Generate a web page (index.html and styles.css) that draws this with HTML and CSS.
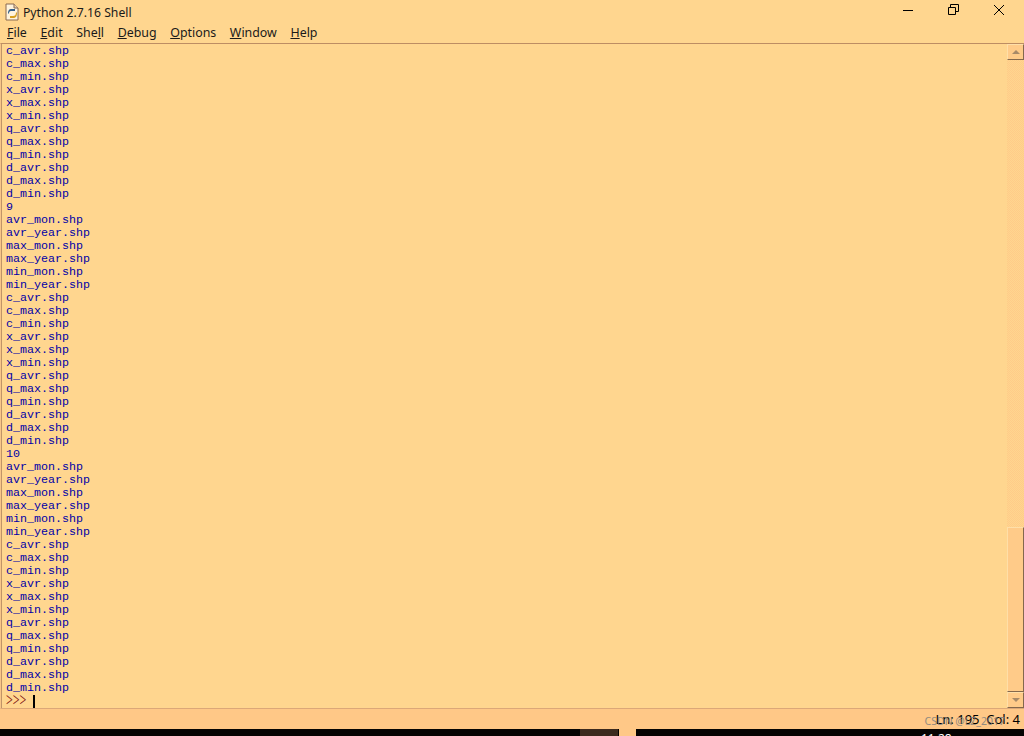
FILE: index.html
```html
<!DOCTYPE html>
<html lang="en">
<head>
<meta charset="utf-8">
<title>Python 2.7.16 Shell</title>
<link rel="stylesheet" href="styles.css">
</head>
<body>
<div class="window">
  <header class="titlebar">
    <svg class="app-icon" width="18" height="18" viewBox="0 0 18 18">
      <path d="M3 1h8l4 4v12H3z" fill="#fff3dc" stroke="#8a6a50"/>
      <path d="M11 1v4h4" fill="#e8d0b0" stroke="#8a6a50"/>
      <path d="M6 11c0-3 1-3 3-3h3V6H8C6 6 5 8 5 10z" fill="#34608c"/>
      <path d="M13 9c0 3-1 4-3 4H7v2h3c3 0 4-2 4-5z" fill="#d8a020"/>
    </svg>
    <span class="title">Python 2.7.16 Shell</span>
    <div class="controls">
      <svg width="12" height="12" viewBox="0 0 12 12"><path d="M0 6.500h10" stroke="#000" fill="none"/></svg>
      <svg width="12" height="12" viewBox="0 0 12 12"><path d="M.5 3.500h7v7h-7zM2.500 3.500v-3h8v7h-3" stroke="#000" fill="none"/></svg>
      <svg width="12" height="12" viewBox="0 0 12 12"><path d="M1 1l10 10M11 1L1 11" stroke="#000" fill="none"/></svg>
    </div>
  </header>
  <nav class="menubar">
    <span><u>F</u>ile</span>
    <span><u>E</u>dit</span>
    <span>She<u>l</u>l</span>
    <span><u>D</u>ebug</span>
    <span><u>O</u>ptions</span>
    <span><u>W</u>indow</span>
    <span><u>H</u>elp</span>
  </nav>
  <main class="editor">
    <pre class="output">c_avr.shp
c_max.shp
c_min.shp
x_avr.shp
x_max.shp
x_min.shp
q_avr.shp
q_max.shp
q_min.shp
d_avr.shp
d_max.shp
d_min.shp
9
avr_mon.shp
avr_year.shp
max_mon.shp
max_year.shp
min_mon.shp
min_year.shp
c_avr.shp
c_max.shp
c_min.shp
x_avr.shp
x_max.shp
x_min.shp
q_avr.shp
q_max.shp
q_min.shp
d_avr.shp
d_max.shp
d_min.shp
10
avr_mon.shp
avr_year.shp
max_mon.shp
max_year.shp
min_mon.shp
min_year.shp
c_avr.shp
c_max.shp
c_min.shp
x_avr.shp
x_max.shp
x_min.shp
q_avr.shp
q_max.shp
q_min.shp
d_avr.shp
d_max.shp
d_min.shp
<span class="prompt">&gt;&gt;&gt;</span><span class="caret"></span></pre>
    <aside class="scrollbar">
      <div class="arrow"><span class="tri-up"></span></div>
      <div class="track"></div>
      <div class="thumb"></div>
      <div class="arrow"><span class="tri-down"></span></div>
    </aside>
  </main>
  <footer class="status">
    <span class="pos">Ln: 195 &nbsp;Col: 4</span>
    <span class="mark">CSDN @LZ_2017</span>
  </footer>
  <div class="taskbar">
    <div class="gap"></div>
    <div class="task-active"></div>
    <div class="task-light"></div>
    <div class="clock">11:28</div>
  </div>
</div>
</body>
</html>
```
FILE: styles.css
```css
* { box-sizing: border-box; }
html, body { margin: 0; height: 100%; overflow: hidden; }
.window {
  width: 1024px;
  height: 736px;
  display: flex;
  flex-direction: column;
  background: #ffd68f;
  font-family: "Noto Sans", "Liberation Sans", sans-serif;
  color: #1a1a1a;
}
.titlebar {
  height: 24px;
  flex: none;
  display: flex;
  align-items: center;
  padding-left: 3px;
}
.app-icon { flex: none; }
.title { margin-left: 2px; font-size: 12.200px; }
.controls {
  margin-left: auto;
  display: flex;
  gap: 33px;
  padding: 0 19px 4px 0;
  align-items: center;
}
.menubar {
  height: 19px;
  flex: none;
  display: flex;
  gap: 13.600px;
  padding-left: 7px;
  font-size: 12.400px;
  line-height: 18px;
}
.editor {
  flex: none;
  height: 666px;
  display: flex;
  background: #ffd68f;
  border-top: 1px solid #bd8d63;
  border-bottom: 1px solid #dca878;
  border-left: 1px solid #f8c688;
  box-shadow: inset 1px 0 0 #c09468;
}
.output {
  flex: 1;
  margin: 0;
  padding: 1px 0 0 5px;
  font-family: "Liberation Mono", "DejaVu Sans Mono", monospace;
  font-size: 11.670px;
  line-height: 13px;
  color: #0000a8;
  white-space: pre;
}
.prompt {
  display: inline-block;
  font-family: "Liberation Serif", serif;
  font-size: 12px;
  line-height: 13px;
  color: #7a0c0c;
  transform: translateY(-1px) scaleY(1.6);
}
.caret {
  display: inline-block;
  width: 2px;
  height: 13px;
  margin-left: 7px;
  background: #000;
  vertical-align: -3px;
}
.scrollbar {
  width: 17px;
  flex: none;
  display: flex;
  flex-direction: column;
  background: #ffcb89;
}
.arrow {
  height: 16px;
  flex: none;
  display: flex;
  align-items: center;
  justify-content: center;
  background: #ffcb89;
  border: 1px solid;
  border-color: #ffdfa8 #84684c #84684c #ffdfa8;
}
.tri-up, .tri-down {
  width: 0;
  height: 0;
  border-left: 4px solid transparent;
  border-right: 4px solid transparent;
}
.tri-up { border-bottom: 4px solid #a88a68; }
.tri-down { border-top: 4px solid #a88a68; }
.track {
  flex: 1;
  background-color: #ffd68f;
  background-image: conic-gradient(#ffcb89 25%, transparent 0 50%, #ffcb89 0 75%, transparent 0);
  background-size: 2px 2px;
}
.thumb {
  height: 165px;
  flex: none;
  background: #ffcb89;
  border: 1px solid;
  border-color: #ffdfa8 #84684c #84684c #ffdfa8;
}
.status {
  flex: 1;
  position: relative;
  background: #ffc887;
  font-size: 13px;
  line-height: 20px;
  text-align: right;
  padding-right: 4px;
  color: #000;
}
.mark {
  position: absolute;
  right: 19px;
  top: 4px;
  font-size: 10.500px;
  line-height: 16px;
  color: #808080;
  opacity: .85;
}
.taskbar {
  height: 8px;
  flex: none;
  display: flex;
  background: #050302;
  overflow: hidden;
}
.gap { width: 580px; flex: none; }
.task-active { width: 38px; flex: none; background: #3c2a1e; }
.task-light { width: 17px; margin-left: 1px; flex: none; background: #ffc887; }
.clock {
  margin-left: 285px;
  padding-top: 4px;
  color: #fff;
  font-size: 12px;
  line-height: 12px;
}
```
